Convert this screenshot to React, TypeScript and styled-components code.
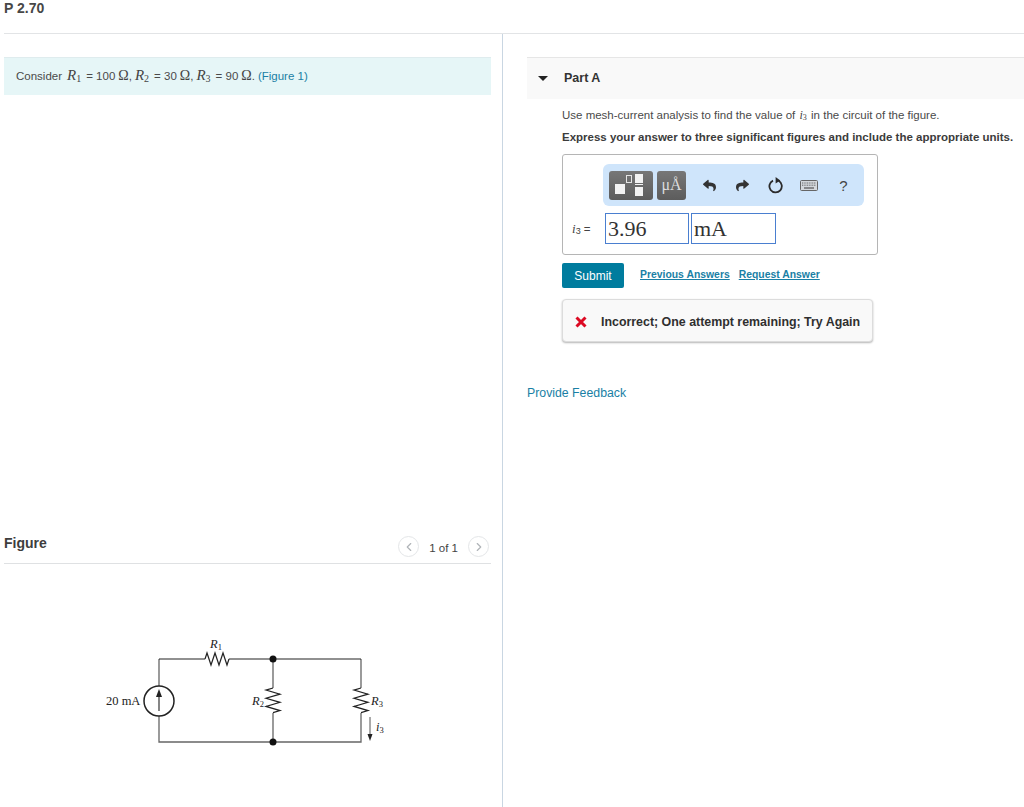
import React from "react";
import styled, { createGlobalStyle } from "styled-components";
import { FaReply, FaShare } from "react-icons/fa";
import { ChevronLeft, ChevronRight } from "lucide-react";

const GlobalStyle = createGlobalStyle`
  html, body {
    margin: 0;
    padding: 0;
    background: #fff;
    font-family: "Liberation Sans", Arial, sans-serif;
    color: #333;
  }
`;

const Page = styled.div`
  width: 1024px;
  height: 807px;
  overflow: hidden;
  padding-left: 4px;
  box-sizing: border-box;
`;

const Header = styled.header`
  height: 33px;
  box-sizing: content-box;
  border-bottom: 1px solid #e2e4e6;
`;

const Title = styled.h1`
  margin: 0;
  font-size: 14px;
  line-height: 16px;
  font-weight: 700;
  color: #474747;
`;

const Columns = styled.main`
  display: flex;
  height: 773px;
`;

const LeftColumn = styled.section`
  width: 499px;
  box-sizing: border-box;
  padding: 23px 11px 0 0;
  border-right: 1px solid #c9d6e2;
  flex: none;
`;

const RightColumn = styled.section`
  flex: 1;
  padding: 23px 0 0 24px;
`;

const ProblemBox = styled.div`
  height: 38px;
  box-sizing: border-box;
  padding: 0 0 2px 12px;
  display: flex;
  align-items: center;
  background: #e6f6f7;
  border-top: 1px solid #dfecee;
  font-size: 11.5px;
  color: #4a4a4a;
  white-space: pre;
`;

const Lead = styled.span`
  margin-right: 2px;
`;

const MathVar = styled.span`
  font-family: "Liberation Serif", serif;
  font-style: italic;
  font-size: 15px;
  color: #444;
  margin: 0 5px 0 3px;
  sub {
    font-size: 10px;
    font-style: normal;
    line-height: 0;
    vertical-align: -2px;
  }
`;

const InlineVar = styled(MathVar)`
  font-size: 12px;
  margin: 0 1px;
  sub {
    font-size: 8px;
    vertical-align: -1px;
  }
`;

const Ohm = styled.span`
  font-family: "Liberation Serif", serif;
  font-size: 14px;
  color: #444;
  margin-left: 3px;
`;

const FigureLink = styled.a`
  color: #1a7fa5;
  margin-left: 3px;
`;

const FigureBar = styled.div`
  margin-top: 438px;
  height: 30px;
  border-bottom: 1px solid #dfe1e3;
  display: flex;
  align-items: flex-start;
  justify-content: space-between;
`;

const FigureTitle = styled.h2`
  margin: 2px 0 0;
  font-size: 14px;
  line-height: 16px;
  font-weight: 700;
  color: #3d3d3d;
`;

const Pager = styled.div`
  display: flex;
  align-items: center;
  gap: 10px;
  margin: 3px 2px 0 0;
  font-size: 11.5px;
  color: #444;
`;

const PagerButton = styled.div`
  width: 21px;
  height: 21px;
  box-sizing: border-box;
  border: 1px solid #e4e6e8;
  border-radius: 50%;
  display: flex;
  align-items: center;
  justify-content: center;
  color: #b0b4b8;
`;

const PagerLabel = styled.span`
  padding-top: 2px;
`;

const CircuitBox = styled.div`
  margin: 61px 0 0 86px;
  svg {
    display: block;
  }
`;

const PartHeader = styled.div`
  height: 42px;
  box-sizing: border-box;
  border-top: 1px solid #e6e6e6;
  background: #f9f9f9;
  display: flex;
  align-items: center;
  padding-left: 11px;
`;

const Caret = styled.span`
  width: 0;
  height: 0;
  border-left: 5px solid transparent;
  border-right: 5px solid transparent;
  border-top: 5px solid #222;
  margin-right: 16px;
`;

const PartTitle = styled.h3`
  margin: 0 0 2px;
  font-size: 12.5px;
  font-weight: 700;
  color: #333;
`;

const PartBody = styled.div`
  padding: 9px 0 0 35px;
`;

const Prompt = styled.p`
  margin: 0;
  font-size: 11.5px;
  line-height: 14px;
  color: #4a4a4a;
  white-space: nowrap;
`;

const Instruction = styled(Prompt)`
  margin-top: 8px;
  font-weight: 700;
  color: #3c3c3c;
  font-size: 11.5px;
`;

const AnswerBox = styled.div`
  margin-top: 10px;
  width: 316px;
  height: 101px;
  box-sizing: border-box;
  border: 1px solid #b5b5b5;
  border-radius: 3px;
  padding: 9px 0 0 9px;
`;

const Toolbar = styled.div`
  width: 261px;
  height: 42px;
  margin-left: 31px;
  box-sizing: border-box;
  padding-left: 6px;
  background: #cfe5fb;
  border-radius: 6px;
  display: flex;
  align-items: center;
`;

const DarkButton = styled.span<{ $w: number }>`
  width: ${(p) => p.$w}px;
  height: 29px;
  margin-right: 4px;
  border-radius: 3px;
  background: linear-gradient(#777, #5c5c5c);
  display: flex;
  align-items: center;
  justify-content: center;
  color: #dcdcdc;
  font-family: "Liberation Serif", serif;
  font-size: 16px;
  flex: none;
`;

const ToolSlot = styled.span`
  width: 33.2px;
  flex: none;
  display: flex;
  align-items: center;
  justify-content: center;
  color: #333;
`;

const FirstSlot = styled(ToolSlot)`
  margin-left: 3px;
`;

const Help = styled(ToolSlot)`
  font-size: 15px;
  color: #444;
  padding-left: 1px;
`;

const InputRow = styled.div`
  display: flex;
  align-items: center;
  margin-top: 7px;
  gap: 2px;
`;

const VarLabel = styled.span`
  width: 31px;
  font-size: 11.5px;
  color: #444;
  white-space: pre;
  sub {
    font-size: 9px;
    line-height: 0;
    vertical-align: -1px;
  }
  i {
    font-family: "Liberation Serif", serif;
    font-size: 13px;
  }
`;

const ValueInput = styled.input<{ $w: number }>`
  width: ${(p) => p.$w}px;
  height: 31px;
  box-sizing: border-box;
  border: 1px solid #4a7fd0;
  border-radius: 0;
  padding: 0 0 0 2px;
  margin: 0;
  outline: none;
  font-family: "Liberation Serif", serif;
  font-size: 22px;
  color: #333;
`;

const ActionRow = styled.div`
  margin-top: 8px;
  display: flex;
  align-items: flex-start;
`;

const SubmitButton = styled.button`
  width: 62px;
  height: 25px;
  padding: 0;
  border: none;
  border-radius: 2px;
  background: #007c9e;
  color: #fff;
  font-family: inherit;
  font-size: 12px;
  margin-right: 16px;
`;

const ActionLink = styled.a`
  font-size: 10.4px;
  line-height: 14px;
  margin: 5px 9px 0 0;
  font-weight: 700;
  color: #1a7fa5;
  text-decoration: underline;
`;

const Feedback = styled.div`
  margin-top: 11px;
  width: 311px;
  height: 43px;
  box-sizing: border-box;
  border: 1px solid #dcdcdc;
  border-radius: 4px;
  background: #f9f9f9;
  box-shadow: 0 1px 2px #b5b5b5;
  display: flex;
  align-items: center;
  padding: 2px 0 0 12px;
  font-size: 12.4px;
  font-weight: 700;
  color: #2f2f2f;
  white-space: nowrap;
  svg {
    margin-right: 14px;
    flex: none;
  }
`;

const FeedbackLink = styled.a`
  display: block;
  margin-top: 44px;
  font-size: 12.3px;
  line-height: 14px;
  color: #1a7fa5;
`;

const TemplateIcon = () => (
  <svg width="44" height="29" viewBox="0 0 44 29" fill="#f2f2f2">
    <rect x="6" y="13" width="10" height="10" />
    <rect x="17.5" y="4.5" width="5" height="7" fill="none" stroke="#e4e4e4" />
    <rect x="26" y="3" width="8" height="9" />
    <rect x="26" y="13" width="8" height="1" />
    <rect x="26" y="16" width="8" height="9" />
  </svg>
);

const ResetIcon = () => (
  <svg width="16" height="17" viewBox="0 0 16 17" fill="none">
    <path d="M5 3.6 A6.2 6.2 0 1 0 10.6 3.8" stroke="#2b2b2b" strokeWidth="1.8" />
    <path d="M7.6 0 L12.4 3.6 L7.6 6.4 Z" fill="#2b2b2b" />
  </svg>
);

const KeyboardIcon = () => (
  <svg width="18" height="11" viewBox="0 0 18 11">
    <rect x="0.5" y="0.5" width="17" height="10" rx="1" fill="#d4d8dc" stroke="#666" />
    <path d="M2 3h14M2 5.2h14" stroke="#666" strokeWidth="1" strokeDasharray="1 .7" />
    <path d="M4 8h10" stroke="#666" strokeWidth="1.4" />
  </svg>
);

const CrossIcon = () => (
  <svg width="12" height="12" viewBox="0 0 12 12">
    <path d="M1.5 1.5 L10.5 10.5 M10.5 1.5 L1.5 10.5" stroke="#dc0a23" strokeWidth="3" />
  </svg>
);

const zig = (x: number, y: number, step: number, amp: number, n: number, vertical: boolean) => {
  // zigzag for a resistor, starts and ends on the wire
  let d = `M${x} ${y}`;
  for (let i = 0; i < n; i++) {
    const side = i % 2 === 0 ? -amp : amp;
    const along = step * (i + 0.5);
    d += vertical ? ` L${x + side} ${y + along}` : ` L${x + along} ${y + side}`;
  }
  d += vertical ? ` L${x} ${y + step * n}` : ` L${x + step * n} ${y}`;
  return d;
};

const Circuit = () => (
  <svg width="310" height="130" viewBox="0 0 310 130">
    <g fill="none" stroke="#666" strokeWidth="1.3">
      <path d="M69 34 V61 M69 91 V117 H271 V88 M271 63 V34" />
      <path d="M183 34 V63 M183 88 V117" />
    </g>
    <g fill="none" stroke="#222" strokeWidth="1.2">
      <path d="M69 34 H115 M139 34 H271" />
      <path d={zig(115, 34, 4, 6, 6, false)} />
      <path d={zig(183, 63, 4.1, 7, 6, true)} />
      <path d={zig(271, 63, 4.1, 7, 6, true)} />
      <circle cx="69" cy="76" r="15" strokeWidth="1.5" />
      <path d="M69 86 V69" stroke="#444" strokeWidth="1.3" />
      <path d="M280 92 V112" stroke="#555" strokeWidth="1" />
    </g>
    <path d="M69 64 L72 72 H66 Z" fill="#222" />
    <path d="M280 116 L277.5 109 H282.5 Z" fill="#222" />
    <circle cx="183" cy="34" r="3.5" fill="#111" />
    <circle cx="183" cy="117" r="3.5" fill="#111" />
    <g fontFamily="'Liberation Serif', serif" fontSize="12.5" fill="#222">
      <text x="16" y="80">20 mA</text>
      <text x="120" y="23" fontStyle="italic">R<tspan fontSize="8.5" dy="2" fontStyle="normal">1</tspan></text>
      <text x="162" y="80" fontStyle="italic">R<tspan fontSize="8.5" dy="2" fontStyle="normal">2</tspan></text>
      <text x="281" y="80" fontStyle="italic">R<tspan fontSize="8.5" dy="2" fontStyle="normal">3</tspan></text>
      <text x="286" y="106" fontStyle="italic">i<tspan fontSize="8.5" dy="2" fontStyle="normal">3</tspan></text>
    </g>
  </svg>
);

const App = () => {
  return (
    <Page>
      <GlobalStyle />
      <Header>
        <Title>P 2.70</Title>
      </Header>
      <Columns>
        <LeftColumn>
          <ProblemBox>
            <Lead>Consider</Lead>
            <MathVar>R<sub>1</sub></MathVar>= 100<Ohm>Ω</Ohm>,
            <MathVar>R<sub>2</sub></MathVar>= 30<Ohm>Ω</Ohm>,
            <MathVar>R<sub>3</sub></MathVar>= 90<Ohm>Ω</Ohm>.
            <FigureLink>(Figure 1)</FigureLink>
          </ProblemBox>
          <FigureBar>
            <FigureTitle>Figure</FigureTitle>
            <Pager>
              <PagerButton><ChevronLeft size={14} strokeWidth={2} /></PagerButton>
              <PagerLabel>1 of 1</PagerLabel>
              <PagerButton><ChevronRight size={14} strokeWidth={2} /></PagerButton>
            </Pager>
          </FigureBar>
          <CircuitBox>
            <Circuit />
          </CircuitBox>
        </LeftColumn>
        <RightColumn>
          <PartHeader>
            <Caret />
            <PartTitle>Part A</PartTitle>
          </PartHeader>
          <PartBody>
            <Prompt>
              Use mesh-current analysis to find the value of <InlineVar>i<sub>3</sub></InlineVar> in the circuit of the figure.
            </Prompt>
            <Instruction>Express your answer to three significant figures and include the appropriate units.</Instruction>
            <AnswerBox>
              <Toolbar>
                <DarkButton $w={44}><TemplateIcon /></DarkButton>
                <DarkButton $w={29}>μÅ</DarkButton>
                <FirstSlot><FaReply size={13} /></FirstSlot>
                <ToolSlot><FaShare size={13} /></ToolSlot>
                <ToolSlot><ResetIcon /></ToolSlot>
                <ToolSlot><KeyboardIcon /></ToolSlot>
                <Help>?</Help>
              </Toolbar>
              <InputRow>
                <VarLabel><i>i</i><sub>3</sub> =</VarLabel>
                <ValueInput $w={84} readOnly value="3.96" />
                <ValueInput $w={85} readOnly value="mA" />
              </InputRow>
            </AnswerBox>
            <ActionRow>
              <SubmitButton>Submit</SubmitButton>
              <ActionLink>Previous Answers</ActionLink>
              <ActionLink>Request Answer</ActionLink>
            </ActionRow>
            <Feedback>
              <CrossIcon />
              Incorrect; One attempt remaining; Try Again
            </Feedback>
          </PartBody>
          <FeedbackLink>Provide Feedback</FeedbackLink>
        </RightColumn>
      </Columns>
    </Page>
  );
};

export default App;
